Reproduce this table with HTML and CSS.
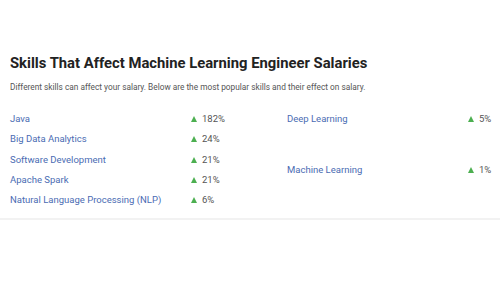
FILE: index.html
```html
<!DOCTYPE html>
<html>
<head>
<meta charset="utf-8">
<link rel="stylesheet" href="styles.css">
</head>
<body>
<section class="skills">
  <h2 class="title">Skills That Affect Machine Learning Engineer Salaries</h2>
  <p class="intro">Different skills can affect your salary. Below are the most popular skills and their effect on salary.</p>
  <div class="cols">
    <ul class="col">
      <li class="row"><a class="skill">Java</a><span class="value"><i class="up"></i>182%</span></li>
      <li class="row"><a class="skill">Big Data Analytics</a><span class="value"><i class="up"></i>24%</span></li>
      <li class="row"><a class="skill">Software Development</a><span class="value"><i class="up"></i>21%</span></li>
      <li class="row"><a class="skill">Apache Spark</a><span class="value"><i class="up"></i>21%</span></li>
      <li class="row"><a class="skill">Natural Language Processing (NLP)</a><span class="value"><i class="up"></i>6%</span></li>
    </ul>
    <ul class="col col-spread">
      <li class="row"><a class="skill">Deep Learning</a><span class="value"><i class="up"></i>5%</span></li>
      <li class="row"><a class="skill">Machine Learning</a><span class="value"><i class="up"></i>1%</span></li>
    </ul>
  </div>
</section>
</body>
</html>
```
FILE: styles.css
```css
html, body {
  margin: 0;
  padding: 0;
  background: #fff;
  overflow: hidden;
}
body {
  font-family: Roboto, "Liberation Sans", sans-serif;
  width: 500px;
  height: 300px;
}
.skills {
  padding: 53px 0 8px 10px;
  border-bottom: 2px solid #f2f2f2;
}
.title {
  margin: 0;
  font-size: 14.8px;
  line-height: 20px;
  font-weight: 700;
  color: #222;
}
.intro {
  margin: 8px 0 0;
  font-size: 8.3px;
  line-height: 13px;
  color: #555;
}
.cols {
  display: grid;
  grid-template-columns: 230px 230px;
  column-gap: 47px;
  margin-top: 15px;
}
.col {
  list-style: none;
  margin: 0;
  padding: 0;
  display: flex;
  flex-direction: column;
}
.col-spread .row {
  flex: 1;
  align-items: flex-start;
}
.row {
  display: flex;
  align-items: center;
  height: 20.25px;
  font-size: 9.5px;
  line-height: 20px;
}
.skill {
  flex: 1;
  color: #4a6cb3;
  text-decoration: none;
}
.value {
  width: 50px;
  display: flex;
  align-items: center;
  gap: 5px;
  color: #555;
}
.up {
  width: 0;
  height: 0;
  border-left: 3.5px solid transparent;
  border-right: 3.5px solid transparent;
  border-bottom: 6px solid #4caf50;
  margin-left: 1px;
}
```
